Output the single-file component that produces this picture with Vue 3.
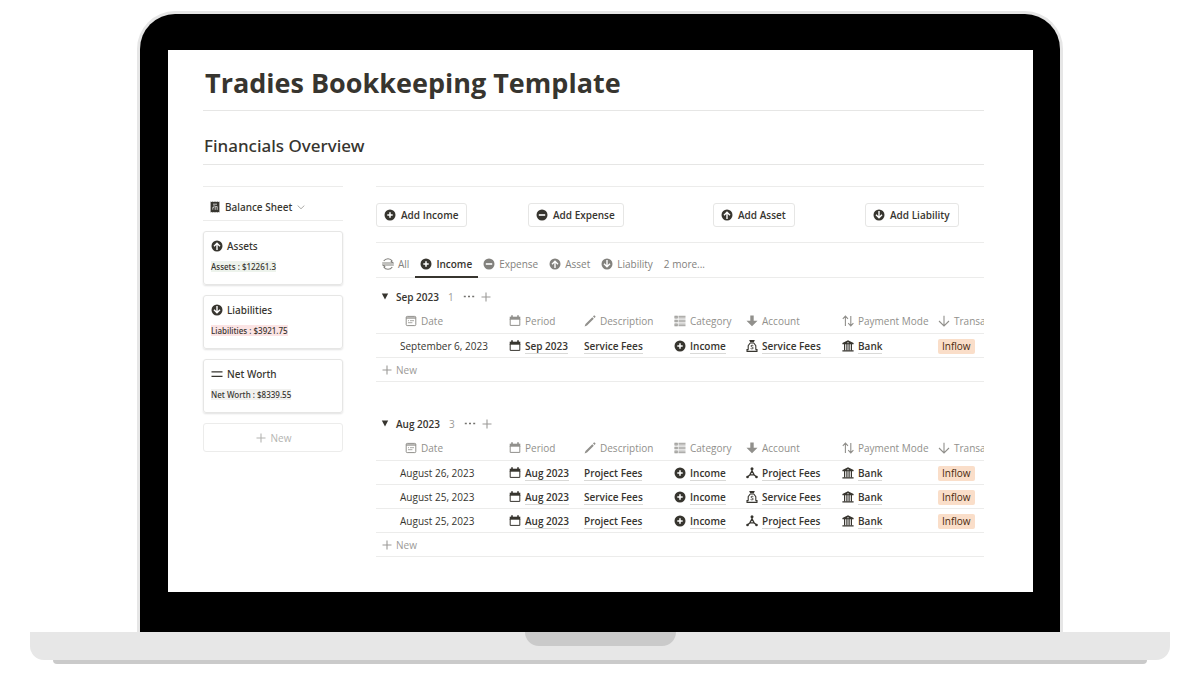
<script setup>
import { ref } from 'vue'

const cards = [
  { icon: 'up', title: 'Assets', text: 'Assets : $12261.3', tone: 'green' },
  { icon: 'down', title: 'Liabilities', text: 'Liabilities : $3921.75', tone: 'red' },
  { icon: 'equals', title: 'Net Worth', text: 'Net Worth : $8339.55', tone: 'gray' },
]

const actions = [
  { icon: 'plus-circle', label: 'Add Income' },
  { icon: 'minus-circle', label: 'Add Expense' },
  { icon: 'up', label: 'Add Asset' },
  { icon: 'down', label: 'Add Liability' },
]

const tabs = [
  { icon: 'all', label: 'All' },
  { icon: 'plus-circle', label: 'Income' },
  { icon: 'minus-circle', label: 'Expense' },
  { icon: 'up', label: 'Asset' },
  { icon: 'down', label: 'Liability' },
]
const activeTab = ref('Income')

const columns = [
  { key: 'date', icon: 'date', label: 'Date' },
  { key: 'period', icon: 'calendar', label: 'Period' },
  { key: 'description', icon: 'pencil', label: 'Description' },
  { key: 'category', icon: 'list', label: 'Category' },
  { key: 'account', icon: 'arrow-bold', label: 'Account' },
  { key: 'payment', icon: 'swap', label: 'Payment Mode' },
  { key: 'transaction', icon: 'arrow-thin', label: 'Transaction' },
]

const groups = ref([
  {
    name: 'Sep 2023',
    open: true,
    rows: [{ date: 'September 6, 2023', fees: 'Service Fees', icon: 'bag' }],
  },
  {
    name: 'Aug 2023',
    open: true,
    rows: [
      { date: 'August 26, 2023', fees: 'Project Fees', icon: 'network' },
      { date: 'August 25, 2023', fees: 'Service Fees', icon: 'bag' },
      { date: 'August 25, 2023', fees: 'Project Fees', icon: 'network' },
    ],
  },
])
</script>

<template>
  <div class="stage">
    <svg class="sprite" aria-hidden="true">
      <symbol id="plus-circle" viewBox="0 0 12 12">
        <circle cx="6" cy="6" r="5.5" fill="currentColor" />
        <path d="M6 3.3v5.4M3.3 6h5.4" stroke="#fff" stroke-width="1.5" />
      </symbol>
      <symbol id="minus-circle" viewBox="0 0 12 12">
        <circle cx="6" cy="6" r="5.5" fill="currentColor" />
        <path d="M2.8 6h6.4" stroke="#fff" stroke-width="1.6" />
      </symbol>
      <symbol id="up" viewBox="0 0 12 12">
        <circle cx="6" cy="6" r="5.5" fill="currentColor" />
        <path d="M6 10V3.2M3 6.2l3-3 3 3" stroke="#fff" stroke-width="1.4" fill="none" />
      </symbol>
      <symbol id="down" viewBox="0 0 12 12">
        <circle cx="6" cy="6" r="5.5" fill="currentColor" />
        <path d="M6 2v6.8M3 5.8l3 3 3-3" stroke="#fff" stroke-width="1.4" fill="none" />
      </symbol>
      <symbol id="equals" viewBox="0 0 12 12">
        <path d="M.5 3.8h11M.5 8.4h11" stroke="currentColor" stroke-width="1.3" />
      </symbol>
      <symbol id="all" viewBox="0 0 12 12">
        <path d="M1.7 3a5.2 5.2 0 0 1 8.6 0M1.7 9a5.2 5.2 0 0 0 8.6 0M.2 5h11L8.8 3M11.8 7H.8l2.4 2" stroke="currentColor" stroke-width="1.1" fill="none" />
      </symbol>
      <symbol id="receipt" viewBox="0 0 12 12">
        <path d="M1.6.5l1.1.6 1.1-.6 1.1.6L6 .5l1.1.6 1.1-.6 1.1.6 1.1-.6v11l-1.1-.6-1.1.6-1.1-.6-1.1.6-1.1-.6-1.1.6-1.1-.6-1.1.6z" fill="currentColor" />
        <path d="M4 3.2h4M3.8 8.7V6.4h1.3M6.2 8.9V5.6h2v3.3M4.2 5h2" stroke="#fff" stroke-width=".7" fill="none" />
      </symbol>
      <symbol id="date" viewBox="0 0 12 12">
        <rect x="1.2" y="1.4" width="9.6" height="9.2" rx="1" fill="none" stroke="currentColor" />
        <path d="M1 3h10" stroke="currentColor" stroke-width="1.3" />
        <path d="M5 5.7h4M3 7.7h4.4M3 5.7h1" stroke="currentColor" stroke-width=".8" />
      </symbol>
      <symbol id="calendar" viewBox="0 0 12 12">
        <path d="M3 .2v2.3M9 .2v2.3" stroke="currentColor" stroke-width="1.6" />
        <path d="M1.2 4v6.4h9.6V4" fill="none" stroke="currentColor" />
        <path d="M.7 1.7h10.6v3H.7z" fill="currentColor" />
      </symbol>
      <symbol id="pencil" viewBox="0 0 12 12">
        <path d="M.6 11.4l.9-2.5L8.3 2.2l1.5 1.5L3 10.5zM9 1.5l.9-.9q.4-.3.8 0l.7.7q.3.4 0 .8l-.9.9z" fill="currentColor" />
      </symbol>
      <symbol id="list" viewBox="0 0 12 12">
        <path d="M.5 .8h3.2v2.6H.5zM.5 4.7h3.2v2.6H.5zM.5 8.6h3.2v2.6H.5z" fill="currentColor" />
        <path d="M4.5 1.3h7M4.5 2.9h7M4.5 5.2h7M4.5 6.8h7M4.5 9.1h7M4.5 10.7h7" stroke="currentColor" stroke-width=".9" />
        <path d="M1.2 2.1h1.6M1.2 6h1.6M1.2 9.9h1.6" stroke="#fff" stroke-width=".6" />
      </symbol>
      <symbol id="arrow-bold" viewBox="0 0 12 12">
        <path d="M4.3.5h3.4v5.2h3.8L6 11.2.5 5.7h3.8z" fill="currentColor" />
      </symbol>
      <symbol id="swap" viewBox="0 0 12 12">
        <path d="M3.4 11V1M.8 3.8l2.6-2.7L6 3.8M8.8 1v10M6.2 8.2l2.6 2.7 2.6-2.7" fill="none" stroke="currentColor" stroke-width="1.1" />
      </symbol>
      <symbol id="arrow-thin" viewBox="0 0 12 12">
        <path d="M6 .8v10M1 6l5 5 5-5" fill="none" stroke="currentColor" stroke-width="1.1" />
      </symbol>
      <symbol id="bag" viewBox="0 0 12 12">
        <path d="M3.2 0h5.6L7.8 2.3H4.2z" fill="currentColor" />
        <path d="M4 3h4M4.2 3L2.2 5.6v4.2M7.8 3l2 2.6v4.2M1 11.2V9.6h1.4M11 11.2V9.6H9.6M.5 11.4h11" fill="none" stroke="currentColor" stroke-width="1.1" />
        <path d="M7.4 5.7Q6 4.7 5 5.6q-.5 1 1 1.4 1.8.5 1.1 1.5Q6 9.4 4.6 8.5" fill="none" stroke="currentColor" stroke-width=".8" />
      </symbol>
      <symbol id="network" viewBox="0 0 12 12">
        <circle cx="6" cy="1.8" r="1.5" fill="currentColor" />
        <circle cx="1.5" cy="10" r="1.3" fill="currentColor" />
        <circle cx="10.5" cy="10" r="1.3" fill="currentColor" />
        <path d="M6 2v1.7L3.8 7.9M6 3.7l2.2 4.2M3.4 7.9h5.2M1.6 9.8l2.2-1.9M10.4 9.8L8.2 7.9" stroke="currentColor" fill="none" stroke-width="1.3" />
      </symbol>
      <symbol id="bank" viewBox="0 0 12 12">
        <path d="M6 .3L11.6 3v1.2H.4V3zM.4 10.3h11.2v1.3H.4z" fill="currentColor" />
        <path d="M2.6 4v6.5M4.9 4v6.5M7.1 4v6.5M9.4 4v6.5" stroke="currentColor" stroke-width="1.2" />
        <circle cx="6" cy="2.7" r=".6" fill="#fff" />
      </symbol>
      <symbol id="plus" viewBox="0 0 12 12">
        <path d="M6 1.5v9M1.5 6h9" stroke="currentColor" stroke-width="1.1" />
      </symbol>
      <symbol id="dots" viewBox="0 0 12 12">
        <path d="M.8 4.7h2v1.6h-2zM5 4.7h2v1.6H5zM9.2 4.7h2v1.6h-2z" fill="currentColor" />
      </symbol>
      <symbol id="triangle" viewBox="0 0 12 12">
        <path d="M2.8 2.6h6.4L6 8.6z" fill="currentColor" />
      </symbol>
      <symbol id="chevron" viewBox="0 0 12 12">
        <path d="M2 4.3l4 3.8 4-3.8" fill="none" stroke="currentColor" />
      </symbol>
    </svg>

    <div class="lid">
      <main class="screen">
        <h1>Tradies Bookkeeping Template</h1>
        <h2>Financials Overview</h2>

        <div class="board">
          <aside class="sidebar">
            <button class="view-picker" type="button">
              <svg class="icon"><use href="#receipt" /></svg>
              Balance Sheet
              <svg class="icon faint chevron"><use href="#chevron" /></svg>
            </button>
            <article v-for="card in cards" :key="card.title" class="card">
              <h3><svg class="icon"><use :href="'#' + card.icon" /></svg>{{ card.title }}</h3>
              <p><span :class="card.tone">{{ card.text }}</span></p>
            </article>
            <button class="new-card" type="button"><svg class="icon"><use href="#plus" /></svg>New</button>
          </aside>

          <section class="ledger">
            <div class="actions">
              <div v-for="action in actions" :key="action.label">
                <button class="action" type="button">
                  <svg class="icon"><use :href="'#' + action.icon" /></svg>{{ action.label }}
                </button>
              </div>
            </div>

            <nav class="tabs">
              <button
                v-for="tab in tabs"
                :key="tab.label"
                class="tab"
                :class="{ active: tab.label === activeTab }"
                type="button"
                @click="activeTab = tab.label"
              >
                <svg class="icon"><use :href="'#' + tab.icon" /></svg>{{ tab.label }}
              </button>
              <button class="tab" type="button">2 more...</button>
            </nav>

            <section v-for="group in groups" :key="group.name" class="group">
              <div class="group-head">
                <button class="toggle" type="button" @click="group.open = !group.open">
                  <svg class="icon"><use href="#triangle" /></svg>{{ group.name }}
                </button>
                <span class="count">{{ group.rows.length }}</span>
                <button class="options" type="button" aria-label="Group options"><svg class="icon"><use href="#dots" /></svg></button>
                <button class="faint" type="button" aria-label="Add row"><svg class="icon"><use href="#plus" /></svg></button>
              </div>
              <div v-if="group.open" class="table-wrap">
                <table>
                  <colgroup><col v-for="c in columns" :key="c.key" :class="c.key" /></colgroup>
                  <thead>
                    <tr>
                      <th v-for="c in columns" :key="c.key" scope="col">
                        <span class="cell"><svg class="icon"><use :href="'#' + c.icon" /></svg>{{ c.label }}</span>
                      </th>
                    </tr>
                  </thead>
                  <tbody>
                    <tr v-for="(row, i) in group.rows" :key="i">
                      <td>{{ row.date }}</td>
                      <td><span class="cell"><svg class="icon"><use href="#calendar" /></svg><a href="#">{{ group.name }}</a></span></td>
                      <td><a href="#">{{ row.fees }}</a></td>
                      <td><span class="cell"><svg class="icon"><use href="#plus-circle" /></svg><a href="#">Income</a></span></td>
                      <td><span class="cell"><svg class="icon"><use :href="'#' + row.icon" /></svg><a href="#">{{ row.fees }}</a></span></td>
                      <td><span class="cell"><svg class="icon"><use href="#bank" /></svg><a href="#">Bank</a></span></td>
                      <td><span class="tag">Inflow</span></td>
                    </tr>
                  </tbody>
                </table>
                <button class="new-row" type="button"><svg class="icon"><use href="#plus" /></svg>New</button>
              </div>
            </section>
          </section>
        </div>
      </main>
    </div>
    <div class="base"><div class="notch"></div></div>
    <div class="foot"></div>
  </div>
</template>

<style>
body {
  margin: 0;
  background: #fff;
}
</style>

<style scoped>
.stage {
  padding: 11px 30px 0;
  font-family: "Open Sans", "Noto Sans", sans-serif;
  font-size: 10px;
  line-height: 16px;
  color: #37352f;
}
.sprite {
  position: absolute;
  width: 0;
  height: 0;
}
.lid {
  margin: 0 107px;
  padding: 36px 27px 40px 28px;
  border: 3px solid #e6e6e6;
  border-bottom: 0;
  border-radius: 38px 38px 0 0;
  background: #000;
}
.screen {
  padding: 12px 49px 35px 35px;
  background: #fff;
}
.base {
  height: 28px;
  border-radius: 0 0 14px 14px;
  background: #e7e7e7;
}
.notch {
  width: 151px;
  height: 14px;
  margin: 0 auto;
  border-radius: 0 0 14px 14px;
  background: #cacaca;
}
.foot {
  height: 4px;
  margin: 0 23px;
  border-radius: 0 0 4px 4px;
  background: #cacaca;
}

h1,
h2,
h3,
p {
  margin: 0;
}
h1 {
  padding: 0 2px 7px;
  border-bottom: 1px solid #e6e6e5;
  font-size: 27px;
  line-height: 41px;
  font-weight: 700;
}
h2 {
  padding: 23px 1px 6px;
  border-bottom: 1px solid #e6e6e5;
  font-family: "Noto Sans", "Open Sans", sans-serif;
  font-size: 17px;
  line-height: 24px;
  font-weight: 500;
}
button {
  display: inline-flex;
  align-items: center;
  padding: 0;
  border: 0;
  background: none;
  color: inherit;
  font: inherit;
  white-space: nowrap;
  cursor: pointer;
}
.icon {
  flex: none;
  width: 12px;
  height: 12px;
}

.board {
  display: grid;
  grid-template-columns: 140px minmax(0, 1fr);
  gap: 33px;
  margin-top: 21px;
}
.sidebar {
  display: flex;
  flex-direction: column;
  gap: 10px;
}
.view-picker {
  gap: 4px;
  height: 35px;
  padding: 7px 6px 0;
  border: solid #ececeb;
  border-width: 1px 0;
  font-family: "Noto Sans", "Open Sans", sans-serif;
  font-weight: 500;
}
.chevron {
  width: 10px;
  height: 10px;
}
.faint {
  color: #9b9a97;
}
.card {
  padding: 6px 7px 10px;
  border: 1px solid #e6e6e5;
  border-radius: 3px;
  box-shadow: 0 1px 2px #0000001f;
  font-family: "Noto Sans", "Open Sans", sans-serif;
}
.card h3 {
  display: flex;
  align-items: center;
  gap: 4px;
  font-size: 10px;
  line-height: 16px;
  font-weight: 500;
}
.card p {
  margin-top: 6px;
  font-size: 8px;
  line-height: 14px;
  font-weight: 500;
}
.green {
  background: #edf3ec;
}
.red {
  background: #fbe4e4;
}
.gray {
  background: #f1f1ef;
}
.new-card {
  justify-content: center;
  gap: 4px;
  height: 29px;
  border: 1px solid #ececeb;
  border-radius: 3px;
  color: #b4b4b1;
}

.actions {
  display: grid;
  grid-template-columns: 152fr 185fr 152fr 119fr;
  padding: 16px 0 15px;
  border: solid #ececeb;
  border-width: 1px 0;
}
.action {
  gap: 5px;
  height: 24px;
  padding: 0 8px 0 7px;
  border: 1px solid #e6e6e5;
  border-radius: 3px;
  font-weight: 600;
}
.tabs {
  display: flex;
  height: 34px;
  padding-left: 1px;
  border-bottom: 1px solid #ececeb;
  color: #82817d;
}
.tab {
  gap: 4px;
  height: 35px;
  padding: 8px 6px 0 5px;
  border-bottom: 2px solid transparent;
}
.tab.active {
  border-color: #37352f;
  color: #37352f;
  font-weight: 600;
}

.group {
  margin-top: 7px;
}
.group + .group {
  margin-top: 30px;
}
.group-head {
  display: flex;
  align-items: center;
  gap: 5px;
  height: 24px;
  padding-left: 3px;
}
.toggle {
  gap: 5px;
  font-weight: 600;
}
.count {
  padding: 0 4px;
  color: #9b9a97;
}
.options {
  color: #73726e;
}
.table-wrap {
  overflow: hidden;
}
table {
  width: 716px;
  border-collapse: separate;
  border-spacing: 0;
  table-layout: fixed;
}
.date {
  width: 133px;
}
.period {
  width: 75px;
}
.description {
  width: 90px;
}
.category {
  width: 72px;
}
.account,
.payment {
  width: 96px;
}
th,
td {
  height: 23px;
  padding: 0;
  border-bottom: 1px solid #ececeb;
  text-align: left;
  white-space: nowrap;
}
th {
  height: 24px;
  color: #91908c;
  font-weight: 400;
}
th:first-child {
  padding-left: 29px;
}
td:first-child {
  padding-left: 24px;
}
.cell {
  display: flex;
  align-items: center;
  gap: 4px;
}
a {
  border-bottom: 1px solid #d9d9d7;
  color: inherit;
  font-weight: 600;
  line-height: 14px;
  text-decoration: none;
}
.cell a {
  padding-top: 1px;
}
.tag {
  display: inline-block;
  padding: 0 4px;
  border-radius: 2px;
  background: #fadec9;
  color: #49290e;
  line-height: 15px;
}
.new-row {
  gap: 3px;
  width: 100%;
  height: 24px;
  padding-left: 5px;
  border-bottom: 1px solid #ececeb;
  color: #9b9a97;
}
</style>
